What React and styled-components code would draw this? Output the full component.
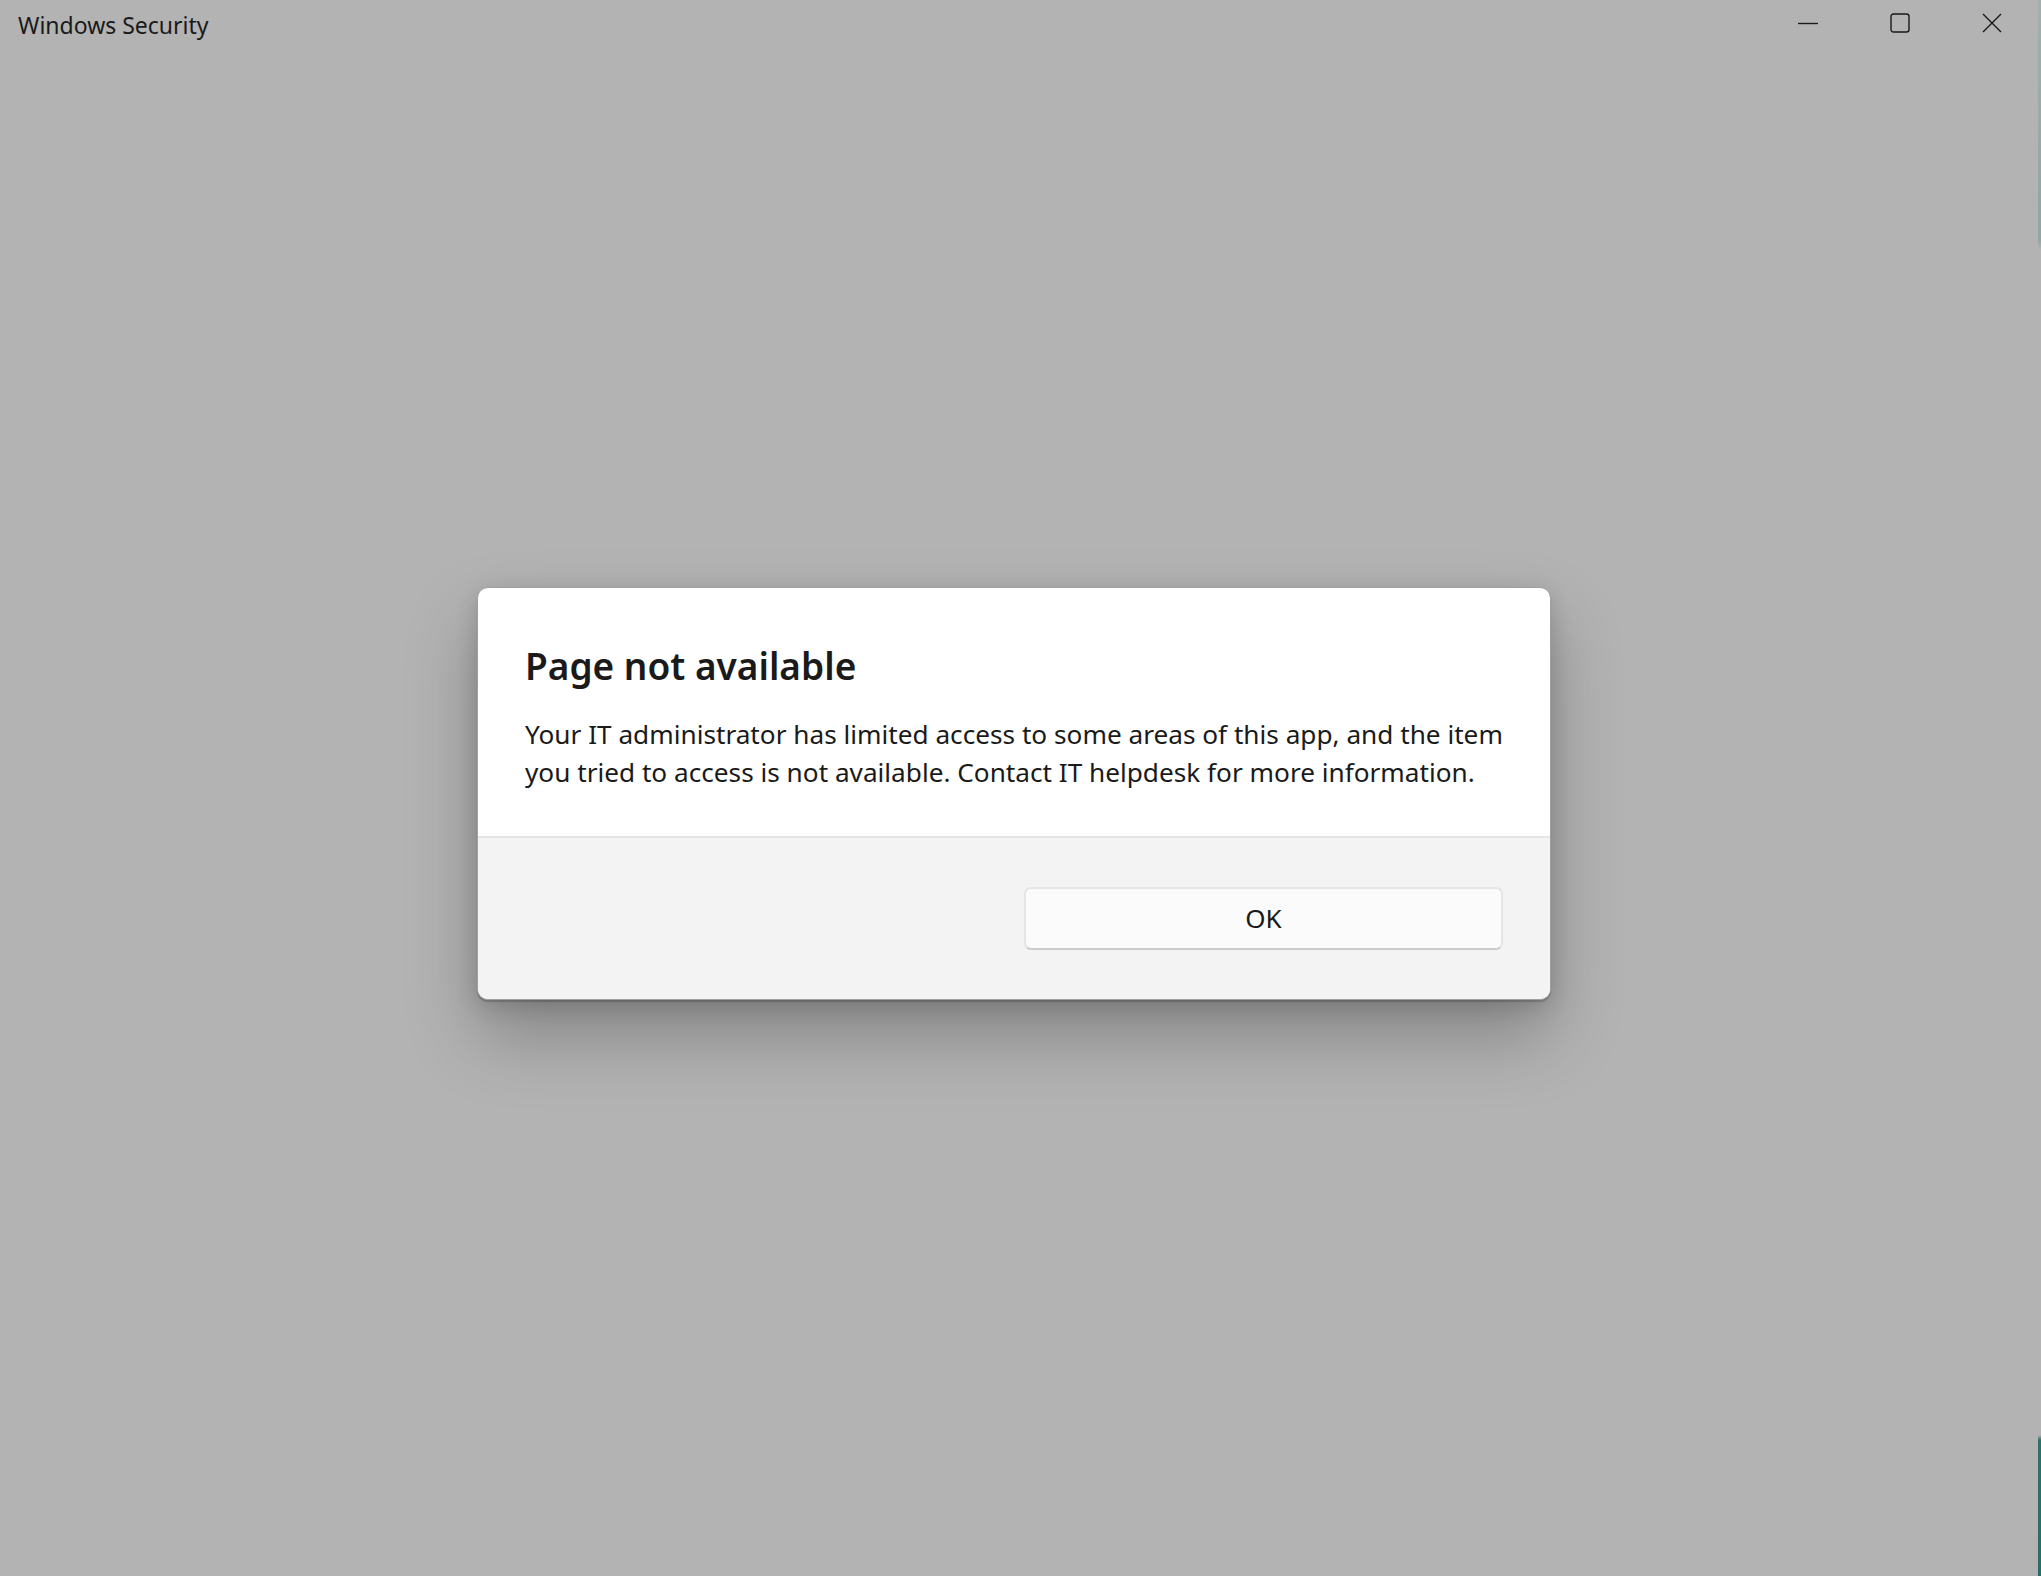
import React from 'react'
import styled, { createGlobalStyle } from 'styled-components'

const GlobalStyle = createGlobalStyle`
  html, body {
    margin: 0;
    padding: 0;
    height: 100%;
    overflow: hidden;
  }
  body {
    background: #b3b3b3;
    font-family: 'Noto Sans', 'Open Sans', sans-serif;
    color: #1b1b1b;
  }
  #root {
    height: 100%;
  }
`

const Window = styled.div`
  display: flex;
  height: 100vh;
  width: 100vw;
`

const Main = styled.div`
  flex: 1;
  display: flex;
  flex-direction: column;
  min-width: 0;
`

const EdgeStrip = styled.div`
  width: 3px;
  background: linear-gradient(
    180deg,
    #9fb0ae 0px,
    #8fa6a4 240px,
    #b3b3b3 250px,
    #b3b3b3 1435px,
    #2f6f6a 1440px,
    #2a6c67 100%
  );
`

const TitleBar = styled.div`
  height: 48px;
  display: flex;
  align-items: center;
  justify-content: space-between;
`

const AppName = styled.span`
  padding-left: 18px;
  font-size: 23px;
  color: #1a1a1a;
  margin-top: 2px;
`

const Controls = styled.div`
  display: flex;
  height: 100%;
`

const ControlButton = styled.button`
  width: 92px;
  height: 46px;
  border: none;
  background: transparent;
  display: flex;
  align-items: center;
  justify-content: center;
  padding: 0;
  svg {
    width: 20px;
    height: 20px;
    stroke: #1a1a1a;
    fill: none;
    stroke-width: 1.4;
  }
`

const Stage = styled.div`
  flex: 1;
  display: flex;
  align-items: center;
  justify-content: center;
  padding: 0 10px 38px 0;
`

const Dialog = styled.div`
  width: 1072px;
  background: #ffffff;
  border-radius: 11px;
  overflow: hidden;
  border: 1px solid #a0a0a0;
  box-shadow: 0 2px 1px rgba(0, 0, 0, 0.18), 0 36px 70px rgba(0, 0, 0, 0.26),
    0 6px 22px rgba(0, 0, 0, 0.14);
`

const Content = styled.div`
  height: 248px;
  box-sizing: border-box;
  padding: 54px 20px 0 47px;
`

const Title = styled.h1`
  margin: 0 0 25px;
  font-size: 37px;
  font-weight: 600;
  line-height: 48px;
  color: #1a1a1a;
`

const Message = styled.p`
  margin: 0;
  font-size: 26.2px;
  line-height: 38.5px;
  color: #1a1a1a;
`

const Footer = styled.div`
  height: 163px;
  box-sizing: border-box;
  background: #f3f3f3;
  border-top: 2px solid #e5e5e5;
  display: flex;
  justify-content: flex-end;
  align-items: flex-start;
  padding: 49px 47px 0 0;
`

const PrimaryButton = styled.button`
  width: 479px;
  height: 63px;
  background: #fbfbfb;
  border: 2px solid #e5e5e5;
  border-bottom-color: #cccccc;
  border-radius: 7px;
  font-family: inherit;
  font-size: 26px;
  color: #1a1a1a;
`

function App() {
  return (
    <>
      <GlobalStyle />
      <Window>
        <Main>
          <TitleBar>
            <AppName>Windows Security</AppName>
            <Controls>
              <ControlButton aria-label="Minimize">
                <svg viewBox="0 0 20 20"><path d="M0 10.5h20" /></svg>
              </ControlButton>
              <ControlButton aria-label="Maximize">
                <svg viewBox="0 0 20 20"><rect x="1" y="1" width="18" height="18" rx="2.5" /></svg>
              </ControlButton>
              <ControlButton aria-label="Close">
                <svg viewBox="0 0 20 20"><path d="M1 1l18 18M19 1L1 19" /></svg>
              </ControlButton>
            </Controls>
          </TitleBar>
          <Stage>
            <Dialog role="dialog">
              <Content>
                <Title>Page not available</Title>
                <Message>
                  Your IT administrator has limited access to some areas of this app, and the item
                  you tried to access is not available. Contact IT helpdesk for more information.
                </Message>
              </Content>
              <Footer>
                <PrimaryButton>OK</PrimaryButton>
              </Footer>
            </Dialog>
          </Stage>
        </Main>
        <EdgeStrip />
      </Window>
    </>
  )
}

export default App
